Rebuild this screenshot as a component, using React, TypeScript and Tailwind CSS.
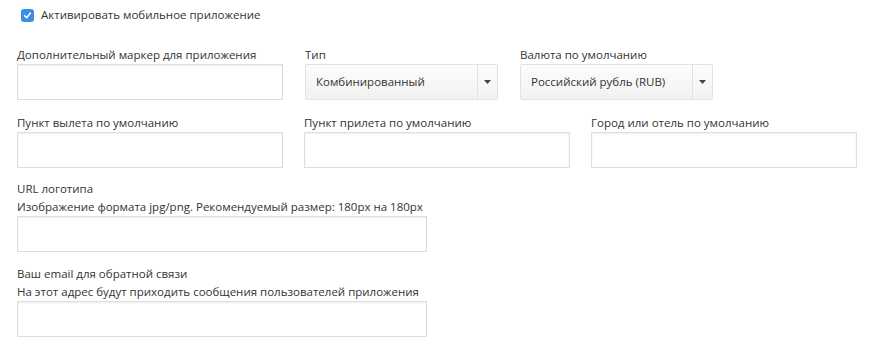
import { ReactNode } from "react";

function TextField({ label, hint, width }: { label: string; hint?: string; width: string }) {
  return (
    <div className={`flex flex-col ${width}`}>
      <span className="whitespace-nowrap leading-[18px]">{label}</span>
      {hint && <span className="whitespace-nowrap leading-[18px]">{hint}</span>}
      <div className="h-[36px] border border-[#dedede] bg-white shadow-[inset_0_1px_2px_rgba(0,0,0,0.07)]" />
    </div>
  );
}

function SelectField({ label, value }: { label: string; value: ReactNode }) {
  return (
    <div className="flex w-[193px] flex-col">
      <span className="whitespace-nowrap leading-[18px]">{label}</span>
      <div className="flex h-[36px] rounded-[2px] border border-[#e2e2e2] bg-gradient-to-b from-[#fdfdfd] to-[#f1f1f1]">
        <span className="flex flex-1 items-center pl-[10px] text-[#333]">{value}</span>
        <span className="flex w-[20px] items-center justify-center border-l border-[#e2e2e2]">
          <svg width="7" height="4" viewBox="0 0 7 4">
            <path d="M0 0h7L3.5 4z" fill="#444" />
          </svg>
        </span>
      </div>
    </div>
  );
}

export default function App() {
  return (
    <div className="min-h-[354px] w-[879px] bg-white pl-[17px] pt-[6px] font-['Open_Sans',sans-serif] text-[11.5px] text-[#333]">
      <label className="ml-[4px] flex items-center gap-[7px] leading-[18px]">
        <span className="flex h-[13px] w-[13px] items-center justify-center rounded-[3px] bg-[#3b8fe8]">
          <svg width="9" height="9" viewBox="0 0 9 9">
            <path d="M1.6 4.7l2 2L7.4 2" fill="none" stroke="#fff" strokeWidth="1.6" strokeLinecap="round" strokeLinejoin="round" />
          </svg>
        </span>
        Активировать мобильное приложение
      </label>

      <div className="mt-[22px] flex gap-[22px]">
        <TextField label="Дополнительный маркер для приложения" width="w-[266px]" />
        <SelectField label="Тип" value="Комбинированный" />
        <SelectField label="Валюта по умолчанию" value="Российский рубль (RUB)" />
      </div>

      <div className="mt-[14px] flex gap-[21px]">
        <TextField label="Пункт вылета по умолчанию" width="w-[266px]" />
        <TextField label="Пункт прилета по умолчанию" width="w-[266px]" />
        <TextField label="Город или отель по умолчанию" width="w-[266px]" />
      </div>

      <div className="mt-[12px] flex">
        <TextField
          label="URL логотипа"
          hint="Изображение формата jpg/png. Рекомендуемый размер: 180px на 180px"
          width="w-[410px]"
        />
      </div>

      <div className="mt-[13px] flex">
        <TextField
          label="Ваш email для обратной связи"
          hint="На этот адрес будут приходить сообщения пользователей приложения"
          width="w-[410px]"
        />
      </div>
    </div>
  );
}
